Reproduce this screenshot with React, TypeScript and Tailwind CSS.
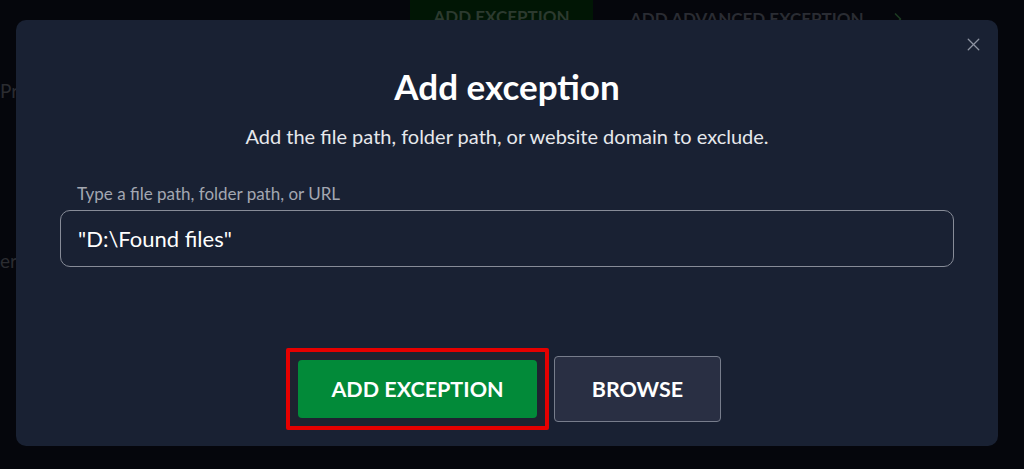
import { X, ChevronRight } from 'lucide-react'

export default function App() {
  return (
    <div
      className="relative h-[469px] w-[1024px] overflow-hidden bg-[#05060c]"
      style={{ fontFamily: 'Lato, "Noto Sans", sans-serif' }}
    >
      {/* page behind the dialog */}
      <div className="flex h-[20px] items-start">
        <div className="ml-[410px] flex h-[26px] w-[183px] items-end justify-center bg-[#011605] pb-[1px] text-[17px] font-bold leading-none text-[#2c3a2f]">
          ADD EXCEPTION
        </div>
        <div className="ml-[37px] flex items-start gap-6 pt-[10px] text-[17px] font-bold leading-none text-[#2a2c33]">
          ADD ADVANCED EXCEPTION
          <ChevronRight size={20} className="-mt-[1px] text-[#1d3a22]" />
        </div>
      </div>
      <div className="absolute left-0 top-[77px] text-[19px] text-[#2b2c31]">Protection</div>
      <div className="absolute left-0 top-[247px] text-[19px] text-[#2b2c31]">er</div>

      {/* dialog */}
      <div className="absolute inset-0 pl-[16px] pr-[26px] pt-[20px] pb-[23px]">
        <div className="relative flex h-full flex-col items-center rounded-[10px] bg-[#192133] px-[44px]">
          <button className="absolute right-[14px] top-[14px] text-[#8d93a1]">
            <X size={21} strokeWidth={1.5} />
          </button>

          <h2 className="mt-[46px] text-[35px] font-bold leading-[40px] text-white">Add exception</h2>
          <p className="mt-[17px] text-[20px] leading-[26px] text-[#e6e8ec]">
            Add the file path, folder path, or website domain to exclude.
          </p>

          <div className="mt-[35px] w-full">
            <label className="ml-[17px] block text-[17px] leading-[20px] text-[#a3a7b1]">
              Type a file path, folder path, or URL
            </label>
            <div className="mt-[6px] flex h-[57px] w-full items-center rounded-[10px] border-[1.5px] border-[#878c98] px-[17px] text-[22px] text-white">
              "D:\Found files"
            </div>
          </div>

          <div className="mt-[81px] mr-[7px] flex items-center gap-[5px]">
            <div className="rounded-[2px] border-[4px] border-[#e50000] bg-[#1e2230] p-[8px]">
              <button className="flex h-[58px] w-[239px] items-center justify-center rounded-[4px] bg-[#028a39] text-[21.5px] font-bold text-white">
                ADD EXCEPTION
              </button>
            </div>
            <button className="flex h-[66px] w-[167px] items-center justify-center rounded-[4px] border-[1.5px] border-[#777d8c] bg-[#292f43] text-[21.5px] font-bold text-white">
              BROWSE
            </button>
          </div>
        </div>
      </div>
    </div>
  )
}
